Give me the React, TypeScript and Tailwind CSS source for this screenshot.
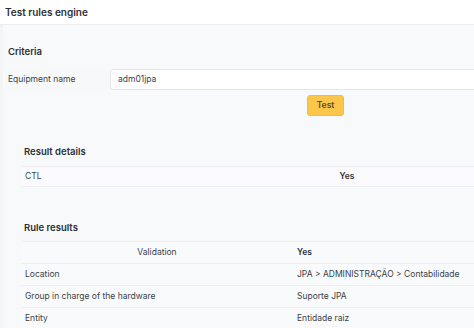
import React from "react";

export default function App() {
  return (
    <div className="w-[474px] h-[328px] overflow-hidden bg-[#f4f5f7] text-[#3a3f47]" style={{ fontFamily: "Inter, 'Noto Sans', sans-serif" }}>
      <div className="h-[25px] bg-white border-b border-[#eceef1] shadow-[0_1px_2px_rgba(0,0,0,0.03)] flex items-center px-[5px]">
        <span className="text-[10px] font-semibold text-[#2b2f36]">Test rules engine</span>
      </div>
      <div className="ml-[3px] bg-[#f8f9fb] pt-[20px] pb-[8px]">
        <div className="px-[5px] text-[9.5px] font-semibold text-[#2b2f36] h-[14px] flex items-center">Criteria</div>
        <div className="mt-[10px] flex items-stretch h-[21px] pl-[2px]">
          <div className="w-[105px] flex items-center pl-[3px] text-[8.5px] bg-[#f7f8fa]">Equipment name</div>
          <div className="flex-1 bg-white border border-[#e3e5e9] rounded-l-[3px] flex items-center pl-[7px] text-[8.5px] -mr-[4px]">adm01jpa</div>
        </div>
        <div className="mt-[5px] flex pl-[304px]">
          <div className="w-[37px] h-[21px] rounded-[3px] bg-[#fcc64a] border border-[#f5bb3b] flex items-center justify-center text-[8.5px] font-semibold text-[#5b4a21]">Test</div>
        </div>
        <div className="mt-[29px] pl-[21px] text-[9.5px] font-semibold text-[#2b2f36] h-[14px] flex items-center">Result details</div>
        <div className="mt-[7px] ml-[19px] h-[21px] flex items-center bg-[#fbfbfd] border-y border-[#eceef1] text-[8.5px]">
          <div className="w-[198px] pl-[3px]">CTL</div>
          <div className="flex-1 text-center font-semibold text-[#2b2f36]">Yes</div>
        </div>
        <div className="mt-[34px] pl-[21px] text-[9.5px] font-semibold text-[#2b2f36] h-[14px] flex items-center">Rule results</div>
        <div className="mt-[6px] ml-[19px] text-[8.5px]">
          {[
            ["Validation", "Yes", true],
            ["Location", "JPA > ADMINISTRAÇÃO > Contabilidade", false],
            ["Group in charge of the hardware", "Suporte JPA", false],
            ["Entity", "Entidade raiz", false],
          ].map(([a, b, head], i) => (
            <div key={i} className="h-[22px] flex items-center border-t border-[#eceef1] bg-[#f9fafb]">
              <div className={head ? "w-[270px] text-center" : "w-[270px] pl-[3px]"}>{a as string}</div>
              <div className={head ? "pl-[5px] font-semibold text-[#2b2f36]" : "pl-[5px]"}>{b as string}</div>
            </div>
          ))}
        </div>
      </div>
    </div>
  );
}
